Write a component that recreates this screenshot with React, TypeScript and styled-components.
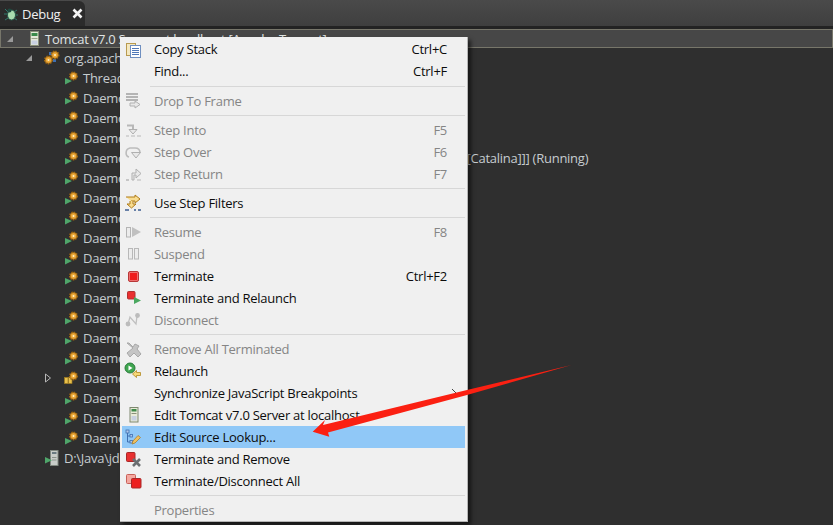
import React from 'react';
import styled, { createGlobalStyle } from 'styled-components';

const GlobalStyle = createGlobalStyle`
  html, body {
    margin: 0;
    padding: 0;
    background: #2f2f2f;
  }
  body {
    font-family: "Open Sans", "Noto Sans", "Liberation Sans", sans-serif;
    font-size: 13px;
    letter-spacing: -0.26px;
  }
`;

const Page = styled.div`
  position: relative;
  width: 833px;
  height: 525px;
  overflow: hidden;
  background: #2f2f2f;
`;

const TabBar = styled.div`
  display: flex;
  align-items: flex-end;
  height: 26px;
  background: linear-gradient(#4a4a4a, #3f3f3f);
  border-bottom: 3px solid #232323;
`;

const Tab = styled.div`
  display: flex;
  align-items: center;
  gap: 4px;
  width: 81px;
  height: 25px;
  padding-left: 4px;
  background: #2b2b2b;
  border-top-right-radius: 6px;
  color: #f0f0f0;
`;

const TabClose = styled.span`
  display: flex;
  margin-left: 8px;
`;

const Tree = styled.div`
  display: flex;
  flex-direction: column;
`;

const TreeRow = styled.div<{ $depth: number; $selected?: boolean }>`
  display: flex;
  align-items: center;
  box-sizing: border-box;
  height: ${(p) => (p.$selected ? 19 : 20)}px;
  padding-left: ${(p) => (p.$selected ? 1 : 2) + p.$depth * 19}px;
  white-space: nowrap;
  color: ${(p) => (p.$selected ? '#e0e4e4' : '#c6cccf')};
  background: ${(p) => (p.$selected ? '#474747' : 'transparent')};
  border: ${(p) => (p.$selected ? '1px solid #77766a' : 'none')};
`;

const Twisty = styled.span`
  display: flex;
  flex: 0 0 22px;
  padding-left: 4px;
  box-sizing: border-box;
`;

const TreeIcon = styled.span`
  display: flex;
  justify-content: center;
  flex: 0 0 20px;
  margin-right: 1px;
`;

const Menu = styled.div`
  position: absolute;
  left: 120px;
  top: 37px;
  box-sizing: border-box;
  width: 348px;
  height: 485px;
  padding: 1px 2px;
  background: #f0f0f0;
  border-right: 1px solid #b5b5b5;
  border-bottom: 1px solid #b5b5b5;
  box-shadow: 3px 3px 4px rgba(0, 0, 0, 0.55);
`;

const MenuRow = styled.div<{ $disabled?: boolean; $active?: boolean }>`
  display: flex;
  align-items: center;
  height: 22px;
  color: ${(p) => (p.$disabled ? '#858585' : '#0c0c0c')};
  background: ${(p) => (p.$active ? '#90c8f7' : 'transparent')};
`;

const MenuIcon = styled.span`
  display: flex;
  justify-content: center;
  flex: 0 0 22px;
  margin-right: 10px;
`;

const MenuLabel = styled.span`
  flex: 1;
  white-space: nowrap;
`;

const Shortcut = styled.span`
  margin-right: 18px;
`;

const SubArrow = styled.span`
  display: flex;
  margin-right: 8px;
`;

const Separator = styled.div<{ $height?: number }>`
  display: flex;
  align-items: center;
  height: ${(p) => p.$height ?? 7}px;
  padding-left: 28px;
  &::after {
    content: '';
    flex: 1;
    height: 1px;
    background: #d7d7d7;
  }
`;

const Arrow = styled.svg`
  position: absolute;
  left: 0;
  top: 0;
  pointer-events: none;
`;

const Icon18 = ({ children }: { children: React.ReactNode }) => (
  <svg width="18" height="18" viewBox="0 0 18 18">
    {children}
  </svg>
);

const BugIcon = () => (
  <svg width="14" height="16" viewBox="0 0 14 16">
    <path d="M1 3l3 3M13 4l-3 2M0 8h3M14 9h-3M1 14l3-2M13 14l-3-2" stroke="#2f7a6c" strokeWidth="1" />
    <ellipse cx="7.5" cy="9" rx="4" ry="5" fill="#a8dcb0" stroke="#27584a" />
    <circle cx="5.5" cy="4.5" r="2" fill="#1f4a40" />
  </svg>
);

const CloseGlyph = () => (
  <svg width="11" height="11" viewBox="0 0 11 11">
    <path d="M1.5 1.5l8 8M9.5 1.5l-8 8" stroke="#f4f4f4" strokeWidth="2.6" />
  </svg>
);

const ExpandedTwisty = () => (
  <svg width="8" height="8" viewBox="0 0 8 8">
    <path d="M1 7h6V1z" fill="#9a9a9a" />
  </svg>
);

const CollapsedTwisty = () => (
  <svg width="8" height="10" viewBox="0 0 8 10">
    <path d="M1.5 1l5 4-5 4z" fill="none" stroke="#b8b8b8" />
  </svg>
);

const Gear = ({ x, y, r = 3.4 }: { x: number; y: number; r?: number }) => (
  <g>
    <circle cx={x} cy={y} r={r + 0.5} fill="none" stroke="#9a6410" strokeWidth="1.3" strokeDasharray="1.6 1" />
    <circle cx={x} cy={y} r={r - 0.2} fill="#eca838" stroke="#b87818" strokeWidth="0.8" />
    <circle cx={x} cy={y} r={1} fill="#fff3c8" />
  </g>
);

const ThreadIcon = () => (
  <svg width="16" height="16" viewBox="0 0 16 16">
    <path d="M1 8l7 3-7 3.5z" fill="#4fa66a" />
    <Gear x={9.5} y={6} />
  </svg>
);

const PausedThreadIcon = () => (
  <svg width="16" height="16" viewBox="0 0 16 16">
    <rect x="0.5" y="7.5" width="3.5" height="6" fill="#e8c04c" stroke="#a07c20" strokeWidth="0.7" />
    <rect x="4.5" y="7.5" width="3.5" height="6" fill="#e8c04c" stroke="#a07c20" strokeWidth="0.7" />
    <Gear x={9.5} y={6} />
  </svg>
);

const ThreadGroupIcon = () => (
  <svg width="18" height="16" viewBox="0 0 18 16">
    <path d="M5 2h3v3H5z" fill="#3f6fb0" />
    <path d="M9 9h3v3H9z" fill="#3f6fb0" />
    <Gear x={4.5} y={10} r={3.4} />
    <Gear x={11} y={5} r={3.4} />
  </svg>
);

const ServerIcon = () => (
  <svg width="9" height="15" viewBox="0 0 9 15">
    <rect x="0.5" y="0.5" width="8" height="14" fill="#e4e8d8" stroke="#8a9078" />
    <rect x="1.5" y="2" width="6" height="3" fill="#3a8a4a" />
    <rect x="1.5" y="7" width="6" height="1" fill="#9aa088" />
    <rect x="1.5" y="9.5" width="6" height="4" fill="#c8d0e0" />
  </svg>
);

const ProcessIcon = () => (
  <svg width="16" height="16" viewBox="0 0 16 16">
    <rect x="5.5" y="0.5" width="7.5" height="15" fill="#c8ccc8" stroke="#808880" />
    <rect x="7" y="2" width="4.5" height="2" fill="#6a7a80" />
    <path d="M7 7.5h4.5M7 10h4.5" stroke="#8a928a" />
    <path d="M0 7l7 3.2L0 13.5z" fill="#4fa66a" />
  </svg>
);

const CopyIcon = () => (
  <Icon18>
    <rect x="2.5" y="3.5" width="9" height="12" fill="#f4e8c0" stroke="#b89a50" />
    <rect x="6.5" y="5.5" width="10" height="12" fill="#fff" stroke="#6f8fc0" />
    <path d="M8 8.5h7M8 10.5h7M8 12.5h7M8 14.5h7" stroke="#4f78b8" />
  </Icon18>
);

const DropIcon = () => (
  <Icon18>
    <path d="M2 2h12M2 5h12M2 8h12" stroke="#b4b4b4" strokeWidth="2" />
    <path d="M6 11h5V9l5 3.5-5 3.5v-2H6z" fill="#e8e8e8" stroke="#b0b0b0" />
  </Icon18>
);

const StepIntoIcon = () => (
  <Icon18>
    <path d="M3 4.5h6v4" fill="none" stroke="#b8b8b8" strokeWidth="2" />
    <path d="M5 8.5h8l-4 4.5z" fill="#e8e8e8" stroke="#b0b0b0" />
    <path d="M2 15h3M7 15h4M13 15h4" stroke="#b8b8b8" />
  </Icon18>
);

const StepOverIcon = () => (
  <Icon18>
    <path d="M5 14C1 13 1 6 6 5h5c3 0 5 2 5 5" fill="none" stroke="#bcbcbc" strokeWidth="1.6" />
    <path d="M7.5 9.5h9l-4.5 5.5z" fill="#e8e8e8" stroke="#b0b0b0" />
  </Icon18>
);

const StepReturnIcon = () => (
  <Icon18>
    <path d="M2 15h3" stroke="#b8b8b8" strokeWidth="1.5" />
    <path d="M8 15V8h4V4l5 4.5L12 13v-3h-2v5z" fill="#e8e8e8" stroke="#b0b0b0" />
    <path d="M13 15h4" stroke="#b8b8b8" />
  </Icon18>
);

const FiltersIcon = () => (
  <Icon18>
    <path d="M2 3h9V1l5 4-5 4V7H7" fill="#f8dc90" stroke="#b07c18" />
    <path d="M6 7v3H3l4.5 4 4.5-4H9V7" fill="#f8dc90" stroke="#b07c18" />
    <path d="M1 16h4M10 16h2M14 16h3" stroke="#3c5c90" strokeWidth="1.3" />
  </Icon18>
);

const ResumeIcon = () => (
  <Icon18>
    <rect x="2.5" y="4.5" width="4" height="9.5" fill="#ececec" stroke="#b4b4b4" />
    <path d="M8 4l9 5-9 5z" fill="#c0c0c0" />
  </Icon18>
);

const SuspendIcon = () => (
  <Icon18>
    <rect x="4.5" y="3.5" width="4" height="10.5" fill="#ececec" stroke="#b8b8b8" />
    <rect x="10.5" y="3.5" width="4" height="10.5" fill="#ececec" stroke="#b8b8b8" />
  </Icon18>
);

const TerminateIcon = () => (
  <Icon18>
    <rect x="4.5" y="4.5" width="10" height="10" rx="1.5" fill="#ee7070" stroke="#b83838" />
    <rect x="6" y="6" width="7" height="7" fill="#ef1c1c" />
  </Icon18>
);

const RelaunchTermIcon = () => (
  <Icon18>
    <rect x="3.5" y="2.5" width="7.5" height="7.5" rx="1" fill="#ea3030" stroke="#b03030" />
    <path d="M10 8l7 3.5L10 15z" fill="#4aa860" />
  </Icon18>
);

const DisconnectIcon = () => (
  <Icon18>
    <path d="M4 13l2-7 6 7 1-8" fill="none" stroke="#c0c0c0" strokeWidth="1.3" />
    <circle cx="4" cy="13" r="2.4" fill="#bcbcbc" />
    <circle cx="13.5" cy="4.5" r="2.4" fill="#bcbcbc" />
  </Icon18>
);

const RemoveAllIcon = () => (
  <Icon18>
    <path d="M3 3l6 5-6 5 3 4 4-4 4 4 3-3-4-5 2-3-4-2-2 3-4-4z" fill="#c4c4c4" stroke="#a8a8a8" />
  </Icon18>
);

const RelaunchIcon = () => (
  <Icon18>
    <circle cx="6" cy="6" r="5" fill="#3fa650" stroke="#2a7a3a" />
    <path d="M4.5 3.5l4 2.5-4 2.5z" fill="#fff" />
    <path d="M8.5 12l4-3.5v2h4v3h-4v2z" fill="#f8d878" stroke="#b08820" strokeWidth="0.8" />
  </Icon18>
);

const EditServerIcon = () => (
  <Icon18>
    <rect x="6" y="1.5" width="8" height="14.5" fill="#e8ebd8" stroke="#7f8870" />
    <rect x="7.5" y="3" width="5" height="2.5" fill="#3f8a4a" />
    <rect x="7.5" y="7" width="5" height="1" fill="#8a9078" />
    <rect x="7.5" y="10" width="5" height="4.5" fill="#c8d0e0" />
  </Icon18>
);

const SourceLookupIcon = () => (
  <Icon18>
    <path d="M3.5 4v10h3M3.5 8h3" fill="none" stroke="#3f6fb0" />
    <rect x="2" y="2" width="3" height="3" fill="#b0c8ec" stroke="#3f6fb0" strokeWidth="0.8" />
    <rect x="6" y="6.5" width="2.5" height="2.5" fill="#b0c8ec" stroke="#3f6fb0" strokeWidth="0.8" />
    <rect x="6" y="12.5" width="2.5" height="2.5" fill="#b0c8ec" stroke="#3f6fb0" strokeWidth="0.8" />
    <path d="M8 16l1-3 5-5.5 2.5 2L11 15z" fill="#f0c060" stroke="#a88030" strokeWidth="0.8" />
  </Icon18>
);

const TermRemoveIcon = () => (
  <Icon18>
    <rect x="2.5" y="2.5" width="8.5" height="9" rx="1" fill="#e83030" stroke="#a82828" />
    <path d="M9 9l7 7M16 9l-7 7" stroke="#6a6e70" strokeWidth="2.6" />
  </Icon18>
);

const TermAllIcon = () => (
  <Icon18>
    <rect x="2.5" y="2.5" width="9" height="9" rx="1" fill="#f4a8a0" stroke="#c86058" />
    <rect x="7.5" y="6.5" width="9.5" height="9.5" rx="1" fill="#ec2020" stroke="#a82828" />
  </Icon18>
);

const threadNames = [
  'Thread [main] (Running)',
  'Daemon Thread [http-bio-8080-exec-1] (Running)',
  'Daemon Thread [http-bio-8080-exec-2] (Running)',
  'Daemon Thread [http-bio-8080-exec-3] (Running)',
  'Daemon Thread [ContainerBackgroundProcessor[StandardEngine[Catalina]]] (Running)',
  'Daemon Thread [http-bio-8080-exec-4] (Running)',
  'Daemon Thread [http-bio-8080-exec-5] (Running)',
  'Daemon Thread [http-bio-8080-exec-6] (Running)',
  'Daemon Thread [http-bio-8080-exec-7] (Running)',
  'Daemon Thread [http-bio-8080-exec-8] (Running)',
  'Daemon Thread [http-bio-8080-exec-9] (Running)',
  'Daemon Thread [http-bio-8080-exec-10] (Running)',
  'Daemon Thread [http-bio-8080-exec-11] (Running)',
  'Daemon Thread [http-bio-8080-exec-12] (Running)',
  'Daemon Thread [http-bio-8080-exec-13] (Running)',
  'Daemon Thread [http-bio-8080-exec-14] (Suspended)',
  'Daemon Thread [http-bio-8080-exec-15] (Running)',
  'Daemon Thread [http-bio-8080-exec-16] (Running)',
  'Daemon Thread [http-bio-8080-exec-17] (Running)',
];

type Item = {
  label?: string;
  icon?: React.ReactNode;
  shortcut?: string;
  disabled?: boolean;
  active?: boolean;
  submenu?: boolean;
  sep?: number;
};

const menuItems: Item[] = [
  { label: 'Copy Stack', icon: <CopyIcon />, shortcut: 'Ctrl+C' },
  { label: 'Find...', shortcut: 'Ctrl+F' },
  { sep: 8 },
  { label: 'Drop To Frame', icon: <DropIcon />, disabled: true },
  { sep: 7 },
  { label: 'Step Into', icon: <StepIntoIcon />, shortcut: 'F5', disabled: true },
  { label: 'Step Over', icon: <StepOverIcon />, shortcut: 'F6', disabled: true },
  { label: 'Step Return', icon: <StepReturnIcon />, shortcut: 'F7', disabled: true },
  { sep: 7 },
  { label: 'Use Step Filters', icon: <FiltersIcon /> },
  { sep: 7 },
  { label: 'Resume', icon: <ResumeIcon />, shortcut: 'F8', disabled: true },
  { label: 'Suspend', icon: <SuspendIcon />, disabled: true },
  { label: 'Terminate', icon: <TerminateIcon />, shortcut: 'Ctrl+F2' },
  { label: 'Terminate and Relaunch', icon: <RelaunchTermIcon /> },
  { label: 'Disconnect', icon: <DisconnectIcon />, disabled: true },
  { sep: 7 },
  { label: 'Remove All Terminated', icon: <RemoveAllIcon />, disabled: true },
  { label: 'Relaunch', icon: <RelaunchIcon /> },
  { label: 'Synchronize JavaScript Breakpoints', submenu: true },
  { label: 'Edit Tomcat v7.0 Server at localhost', icon: <EditServerIcon /> },
  { label: 'Edit Source Lookup...', icon: <SourceLookupIcon />, active: true },
  { label: 'Terminate and Remove', icon: <TermRemoveIcon /> },
  { label: 'Terminate/Disconnect All', icon: <TermAllIcon /> },
  { sep: 7 },
  { label: 'Properties', disabled: true },
];

export default function App() {
  return (
    <Page>
      <GlobalStyle />
      <TabBar>
        <Tab>
          <BugIcon />
          Debug
          <TabClose>
            <CloseGlyph />
          </TabClose>
        </Tab>
      </TabBar>
      <Tree>
        <TreeRow $depth={0} $selected>
          <Twisty>
            <ExpandedTwisty />
          </Twisty>
          <TreeIcon>
            <ServerIcon />
          </TreeIcon>
          Tomcat v7.0 Server at localhost [Apache Tomcat]
        </TreeRow>
        <TreeRow $depth={1}>
          <Twisty>
            <ExpandedTwisty />
          </Twisty>
          <TreeIcon>
            <ThreadGroupIcon />
          </TreeIcon>
          org.apache.catalina.startup.Bootstrap at localhost:49152
        </TreeRow>
        {threadNames.map((name, i) => (
          <TreeRow $depth={2} key={i}>
            <Twisty>{i === 15 && <CollapsedTwisty />}</Twisty>
            <TreeIcon>{i === 15 ? <PausedThreadIcon /> : <ThreadIcon />}</TreeIcon>
            {name}
          </TreeRow>
        ))}
        <TreeRow $depth={1}>
          <Twisty />
          <TreeIcon>
            <ProcessIcon />
          </TreeIcon>
          D:\Java\jdk1.7.0\bin\javaw.exe (2014-5-20 10:12:33)
        </TreeRow>
      </Tree>
      <Menu>
        {menuItems.map((item, i) =>
          item.sep ? (
            <Separator $height={item.sep} key={i} />
          ) : (
            <MenuRow $disabled={item.disabled} $active={item.active} key={i}>
              <MenuIcon>{item.icon}</MenuIcon>
              <MenuLabel>{item.label}</MenuLabel>
              {item.shortcut && <Shortcut>{item.shortcut}</Shortcut>}
              {item.submenu && (
                <SubArrow>
                  <svg width="6" height="10" viewBox="0 0 6 10">
                    <path d="M1 1l4 4-4 4" fill="none" stroke="#444" />
                  </svg>
                </SubArrow>
              )}
            </MenuRow>
          ),
        )}
      </Menu>
      <Arrow width="833" height="525" viewBox="0 0 833 525">
        <path
          d="M571.5 365 L467 390 L323 425 L325 420 L312.7 431.7 L329.3 436.7 L328 432.5 L467 395 Z"
          fill="#fb2012"
        />
      </Arrow>
    </Page>
  );
}
